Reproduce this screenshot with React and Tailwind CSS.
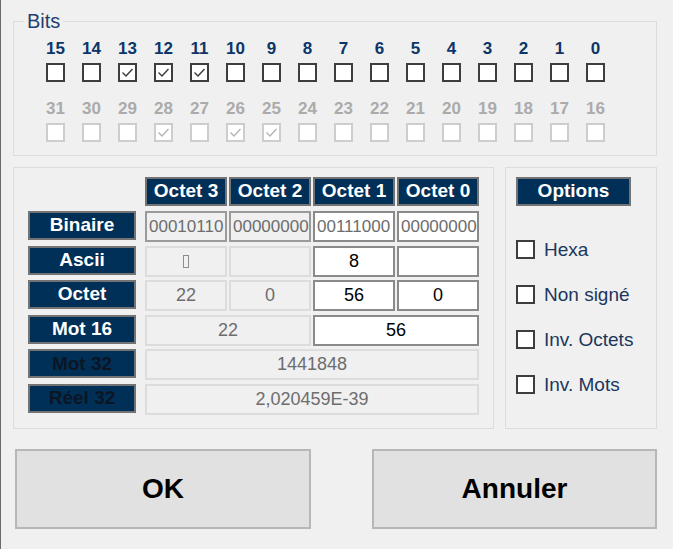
import React from "react";

const topBits = [15, 14, 13, 12, 11, 10, 9, 8, 7, 6, 5, 4, 3, 2, 1, 0];
const lowBits = [31, 30, 29, 28, 27, 26, 25, 24, 23, 22, 21, 20, 19, 18, 17, 16];
const topChecked = [13, 12, 11];
const lowChecked = [28, 26, 25];

function CheckBox({ checked = false, disabled = false }) {
  return (
    <div
      className={`flex h-[19px] w-[19px] shrink-0 items-center justify-center border-2 bg-white ${
        disabled ? "border-[#cdcdcd]" : "border-[#3d3d3d]"
      }`}
    >
      {checked && (
        <svg width="15" height="15" viewBox="0 0 15 15" fill="none">
          <polyline
            points="2.5,7.5 6,11 12.5,4"
            stroke={disabled ? "#b4b4b4" : "#3a3a3a"}
            strokeWidth="1.4"
          />
        </svg>
      )}
    </div>
  );
}

function BitRow({ bits, checked, disabled }) {
  return (
    <div className="flex gap-[17px]">
      {bits.map((b) => (
        <div key={b} className="flex w-[19px] flex-col items-center">
          <span
            className={`whitespace-nowrap text-[17px] font-bold leading-[20px] ${
              disabled ? "text-[#ababab]" : "text-[#0c3668]"
            }`}
          >
            {b}
          </span>
          <div className="mt-[4px]">
            <CheckBox checked={checked.includes(b)} disabled={disabled} />
          </div>
        </div>
      ))}
    </div>
  );
}

function Badge({ children, dim = false, className = "" }) {
  return (
    <div
      className={`flex h-[29px] items-center justify-center border-2 border-[#737373] bg-[#003057] text-[19px] font-bold ${
        dim ? "text-[#0b1624]" : "text-white"
      } ${className}`}
    >
      {children}
    </div>
  );
}

// kind: "ro" = grey read-only label, "box" = grey textbox, "edit" = white textbox
function Cell({ kind = "ro", left = false, span = "", children }) {
  const frame = {
    ro: "border-[#dcdcdc] bg-[#f0f0f0]",
    box: "border-[#9a9a9a] bg-[#f0f0f0]",
    edit: "border-[#8a8a8a] bg-white",
  }[kind];
  const ink = left || kind !== "edit" ? "text-[#6d6d6d]" : "text-black";
  return (
    <div
      className={`flex h-[31px] items-center overflow-hidden whitespace-nowrap border-2 ${
        left ? "justify-start pl-[2px] text-[17px]" : "justify-center text-[18px]"
      } ${frame} ${ink} ${span}`}
    >
      {children}
    </div>
  );
}

function DataRow({ label, dim, children }) {
  return (
    <div className="flex items-start">
      <Badge dim={dim} className="mr-[9px] w-[108px]">
        {label}
      </Badge>
      <div className="grid w-[334px] grid-cols-4 gap-[2px]">{children}</div>
    </div>
  );
}

function Option({ label }) {
  return (
    <div className="flex items-center gap-[9px]">
      <CheckBox />
      <span className="text-[19px] leading-[19px] text-[#1b365d]">{label}</span>
    </div>
  );
}

export default function App() {
  return (
    <div className="h-[549px] w-[673px] overflow-hidden border-l border-[#6b6b6b] bg-[#f0f0f0] pl-3 pr-4 font-['Liberation_Sans',Arial,sans-serif]">
      <fieldset className="mt-[11px] border border-[#dcdcdc]">
        <legend className="ml-[10px] px-[3px] text-[20px] leading-[20px] text-[#1e3f6f]">Bits</legend>
        <div className="pb-[13px] pl-[32px] pt-[8px]">
          <BitRow bits={topBits} checked={topChecked} />
          <div className="mt-[17px]">
            <BitRow bits={lowBits} checked={lowChecked} disabled />
          </div>
        </div>
      </fieldset>

      <div className="mt-[11px] flex h-[262px] gap-[11px]">
        <div className="w-[481px] border border-[#dcdcdc] pl-[14px] pt-[9px]">
          <div className="ml-[117px] grid w-[334px] grid-cols-4 gap-[2px]">
            <Badge>Octet 3</Badge>
            <Badge>Octet 2</Badge>
            <Badge>Octet 1</Badge>
            <Badge>Octet 0</Badge>
          </div>
          <div className="mt-[5px] flex flex-col gap-[3.6px]">
            <DataRow label="Binaire">
              <Cell kind="box" left>00010110</Cell>
              <Cell kind="box" left>00000000</Cell>
              <Cell kind="edit" left>00111000</Cell>
              <Cell kind="edit" left>00000000</Cell>
            </DataRow>
            <DataRow label="Ascii">
              <Cell>
                <span className="inline-block h-[13px] w-[6px] border border-[#8c8c8c]"></span>
              </Cell>
              <Cell></Cell>
              <Cell kind="edit">8</Cell>
              <Cell kind="edit"></Cell>
            </DataRow>
            <DataRow label="Octet">
              <Cell>22</Cell>
              <Cell>0</Cell>
              <Cell kind="edit">56</Cell>
              <Cell kind="edit">0</Cell>
            </DataRow>
            <DataRow label="Mot 16">
              <Cell span="col-span-2">22</Cell>
              <Cell kind="edit" span="col-span-2">56</Cell>
            </DataRow>
            <DataRow label="Mot 32" dim>
              <Cell span="col-span-4">1441848</Cell>
            </DataRow>
            <DataRow label="Réel 32" dim>
              <Cell span="col-span-4">2,020459E-39</Cell>
            </DataRow>
          </div>
        </div>

        <div className="w-[152px] border border-[#dcdcdc] pl-[10px] pt-[9px]">
          <Badge className="w-[115px]">Options</Badge>
          <div className="mt-[34px] flex flex-col gap-[26px]">
            <Option label="Hexa" />
            <Option label="Non signé" />
            <Option label="Inv. Octets" />
            <Option label="Inv. Mots" />
          </div>
        </div>
      </div>

      <div className="mt-[20px] flex">
        <button className="ml-[2px] h-[80px] w-[296px] border-2 border-[#b7b7b7] bg-[#e1e1e1] text-[28px] font-bold text-black">
          OK
        </button>
        <button className="ml-[61px] h-[80px] w-[285px] border-2 border-[#b7b7b7] bg-[#e1e1e1] text-[28px] font-bold text-black">
          Annuler
        </button>
      </div>
    </div>
  );
}
